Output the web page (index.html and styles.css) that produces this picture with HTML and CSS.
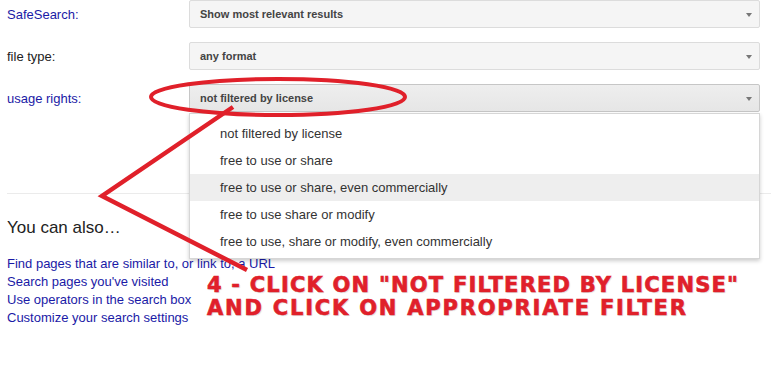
FILE: index.html
```html
<!DOCTYPE html>
<html lang="en">
<head>
    <meta charset="UTF-8">
    <title>Advanced Search</title>
    <link rel="stylesheet" href="styles.css">
</head>
<body>
    <div class="page">
        <div class="settings">
            <div class="row">
                <div class="label link">SafeSearch:</div>
                <div class="select">Show most relevant results<span class="arrow"></span></div>
            </div>
            <div class="row">
                <div class="label">file type:</div>
                <div class="select">any format<span class="arrow"></span></div>
            </div>
            <div class="row">
                <div class="label link">usage rights:</div>
                <div class="select-wrap">
                    <div class="select open">not filtered by license<span class="arrow"></span></div>
                    <ul class="menu">
                        <li>not filtered by license</li>
                        <li>free to use or share</li>
                        <li class="hover">free to use or share, even commercially</li>
                        <li>free to use share or modify</li>
                        <li>free to use, share or modify, even commercially</li>
                    </ul>
                </div>
            </div>
        </div>

        <hr class="rule">

        <div class="also">
            <h2>You can also…</h2>
            <a href="#">Find pages that are similar to, or link to, a URL</a>
            <a href="#">Search pages you've visited</a>
            <a href="#">Use operators in the search box</a>
            <a href="#">Customize your search settings</a>
        </div>

        <!-- hand-drawn annotation on top of the screenshot -->
        <svg class="marks" width="771" height="376" viewBox="0 0 771 376">
            <ellipse cx="278" cy="97" rx="127" ry="18" fill="none" stroke="#e0202a" stroke-width="4"/>
            <polyline points="233,107 102,196 247,270" fill="none" stroke="#e0202a" stroke-width="4.5" stroke-linejoin="miter"/>
        </svg>
        <div class="note">
            <div>4 - CLICK ON "NOT FILTERED BY LICENSE"</div>
            <div class="wide">AND CLICK ON APPROPRIATE FILTER</div>
        </div>
    </div>
</body>
</html>
```

FILE: styles.css
```css
body {
    margin: 0;
    background: #fff;
    font-family: Arial, "Liberation Sans", sans-serif;
    color: #222;
}

.page {
    position: relative;
    width: 771px;
    height: 376px;
    overflow: hidden;
}

.settings {
    display: flex;
    flex-direction: column;
    gap: 14px;
}

.row {
    display: flex;
    align-items: center;
    padding-left: 7px;
}

.label {
    width: 182px;
    font-size: 13px;
    color: #222;
}

.label.link {
    color: #1a1aa6;
}

.select-wrap {
    position: relative;
}

.select {
    position: relative;
    box-sizing: border-box;
    width: 571px;
    height: 28px;
    line-height: 26px;
    padding-left: 10px;
    border: 1px solid #dcdcdc;
    border-radius: 2px;
    background: #f5f5f5;
    font-size: 11px;
    font-weight: bold;
    color: #444;
}

.select.open {
    background: linear-gradient(#eeeeee, #e6e6e6);
    border-color: #c6c6c6;
}

.arrow {
    position: absolute;
    right: 7px;
    top: 12px;
    border-left: 3px solid transparent;
    border-right: 3px solid transparent;
    border-top: 4px solid #777;
}

.menu {
    position: absolute;
    top: 29px;
    left: 0;
    z-index: 2;
    box-sizing: border-box;
    width: 571px;
    margin: 0;
    padding: 6px 0 3px;
    list-style: none;
    background: #fff;
    border: 1px solid #d6d6d6;
    box-shadow: 0 2px 4px rgba(0,0,0,0.2);
}

.menu li {
    height: 27px;
    line-height: 27px;
    padding-left: 30px;
    font-size: 13px;
    color: #333;
}

.menu li.hover {
    background: #eeeeee;
}

.rule {
    margin: 81px 0 0 7px;
    border: 0;
    border-top: 1px solid #ebebeb;
}

.also {
    display: flex;
    flex-direction: column;
    align-items: flex-start;
    padding-left: 7px;
}

.also h2 {
    margin: 24px 0 17px;
    font-size: 17px;
    font-weight: normal;
    color: #222;
}

.also a {
    font-size: 13px;
    line-height: 18px;
    color: #1a1aa6;
    text-decoration: none;
}

.marks {
    position: absolute;
    left: 0;
    top: 0;
    z-index: 3;
    pointer-events: none;
}

.note {
    position: absolute;
    left: 207px;
    top: 274px;
    z-index: 3;
    font-family: "DejaVu Sans", sans-serif;
    font-size: 21px;
    font-weight: bold;
    line-height: 23px;
    letter-spacing: 1.2px;
    white-space: nowrap;
    color: #e0202a;
    -webkit-text-stroke: 0.6px #e0202a;
    text-shadow: 1px 1px 1px rgba(0,0,0,0.15);
}

.note .wide {
    letter-spacing: 1.8px;
}
```
